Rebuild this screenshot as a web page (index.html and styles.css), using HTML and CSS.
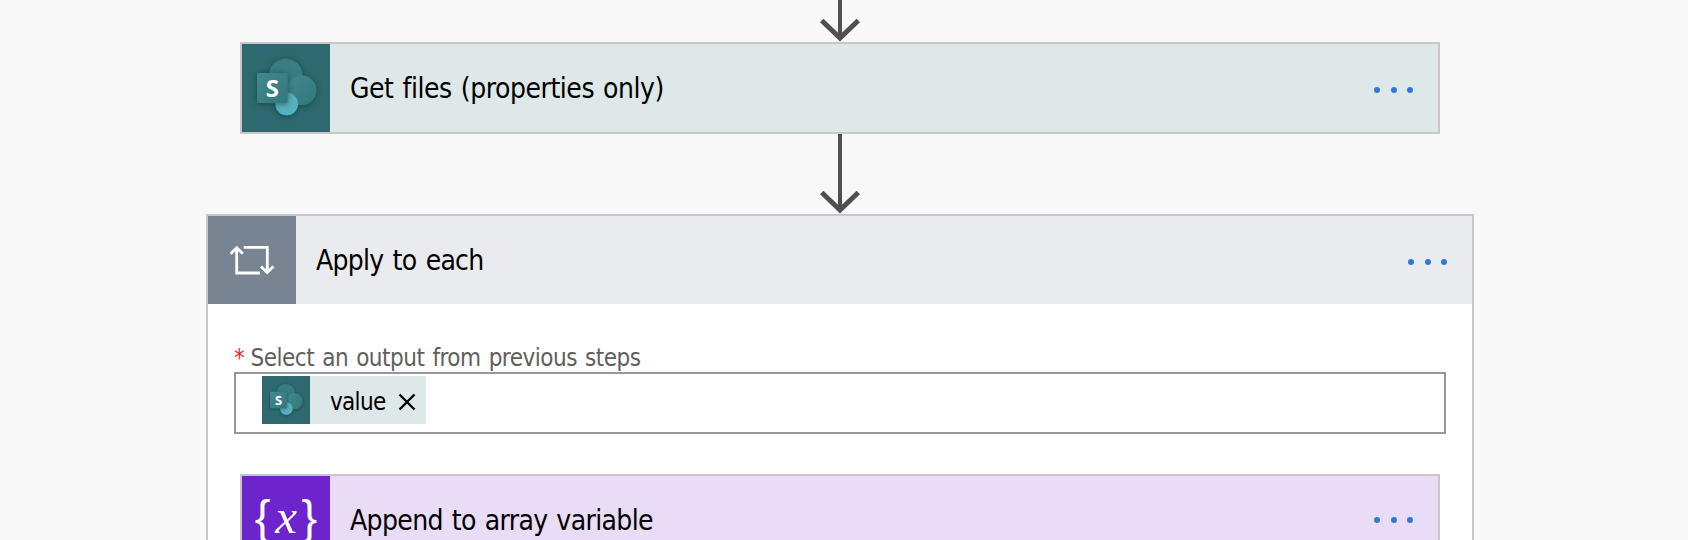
FILE: index.html
```
<!DOCTYPE html>
<html lang="en">
<head>
  <meta charset="UTF-8" />
  <meta name="viewport" content="width=device-width, initial-scale=1.0" />
  <title>Flow Designer</title>
  <link rel="stylesheet" href="styles.css">
</head>
<body>
  <!-- shared SharePoint logo -->
  <svg class="defs" width="0" height="0">
    <defs>
      <linearGradient id="tealFill" x1="0" y1="0" x2="1" y2="1">
        <stop offset="0" stop-color="#43898e" />
        <stop offset="1" stop-color="#32777c" />
      </linearGradient>
      <filter id="logoShadow" x="-30%" y="-30%" width="160%" height="160%">
        <feDropShadow dx="0" dy="1" stdDeviation="3" flood-color="#0f3336" flood-opacity="0.6" />
      </filter>
      <symbol id="sharepoint" viewBox="0 0 88 88">
        <g filter="url(#logoShadow)">
          <circle cx="43.7" cy="31.5" r="16.8" fill="#397d82" />
          <circle cx="59.7" cy="46.3" r="14.7" fill="url(#tealFill)" />
          <circle cx="44.7" cy="60" r="11.3" fill="#58b1c2" />
        </g>
        <rect x="15" y="29" width="30.7" height="30" rx="1.5" fill="url(#tealFill)" filter="url(#logoShadow)" />
        <text class="logo-letter" x="30.3" y="52.6" text-anchor="middle">S</text>
      </symbol>
    </defs>
  </svg>

  <main class="flow">
    <svg class="arrow arrow-top" viewBox="0 38 40 42">
      <path d="M20 0V75" />
      <path class="arrow-head" d="M1.7 58.5L20 76L38.3 58.5" />
    </svg>

    <section class="card card-files">
      <div class="card-icon">
        <svg width="88" height="88"><use href="#sharepoint" /></svg>
      </div>
      <h2 class="card-title title-files">Get files (properties only)</h2>
      <div class="menu"><span></span><span></span><span></span></div>
    </section>

    <svg class="arrow" viewBox="0 0 40 80">
      <path d="M20 0V75" />
      <path class="arrow-head" d="M1.7 58.5L20 76L38.3 58.5" />
    </svg>

    <section class="loop">
      <div class="loop-header">
        <div class="card-icon">
          <svg class="loop-icon" width="88" height="88" viewBox="0 0 88 88">
            <path d="M28.7 31.5V57H52M22.7 37.8L28.7 31.8L34.9 37.8" />
            <path d="M35.7 31.3H59.3V56M53 50.5L59.2 56.5L65.4 50.5" />
          </svg>
        </div>
        <h2 class="card-title title-loop">Apply to each</h2>
        <div class="menu"><span></span><span></span><span></span></div>
      </div>

      <div class="loop-body">
        <div class="field-label"><span class="required">*</span><span class="label-text">Select an output from previous steps</span></div>
        <div class="field">
          <div class="token">
            <svg class="token-icon" width="48" height="48"><use href="#sharepoint" /></svg>
            <span class="token-text">value</span>
            <svg class="token-close" width="18" height="18" viewBox="0 0 18 18">
              <path d="M1.5 1.5L16.5 16.5M16.5 1.5L1.5 16.5" />
            </svg>
          </div>
        </div>

        <section class="card card-append">
          <div class="card-icon">
            <span class="brace">{</span><span class="var">x</span><span class="brace">}</span>
          </div>
          <h2 class="card-title title-append">Append to array variable</h2>
          <div class="menu"><span></span><span></span><span></span></div>
        </section>
      </div>
    </section>
  </main>
</body>
</html>
```
FILE: styles.css
```
* {
  margin: 0;
  padding: 0;
  box-sizing: border-box;
}

body {
  height: 540px;
  overflow: hidden;
  background-color: #f8f8f8;
  color: #000;
  font-family: "DejaVu Sans Condensed", "DejaVu Sans", sans-serif;
  font-stretch: condensed;
}

svg {
  display: block;
  flex-shrink: 0;
}

.defs {
  position: absolute;
}

.flow {
  display: flex;
  flex-direction: column;
  align-items: center;
  width: 1680px;
  height: 540px;
  overflow: hidden;
}

.arrow {
  width: 40px;
  height: 80px;
  fill: none;
  stroke: #505050;
  stroke-width: 4;
}

.arrow-head {
  stroke-width: 5;
}

.arrow-top {
  height: 42px;
}

.card {
  display: flex;
  align-items: center;
  width: 1200px;
  height: 92px;
  flex-shrink: 0;
  border: 2px solid #c8c6c6;
}

.card-files {
  background-color: #dfe8e9;
}

.card-files .card-icon,
.token-icon {
  background-color: #2d696e;
}

.card-icon {
  display: flex;
  align-items: center;
  justify-content: center;
  width: 88px;
  height: 88px;
  flex-shrink: 0;
}

.logo-letter {
  fill: #fff;
  font-family: "Noto Sans", sans-serif;
  font-size: 24px;
  font-weight: 700;
}

.card-title {
  flex: 1;
  margin: 2px 0 0 20px;
  font-size: 28px;
  font-weight: 400;
  line-height: 40px;
  white-space: nowrap;
}

.title-files {
  letter-spacing: -0.46px;
  word-spacing: 1.5px;
}

.title-loop {
  letter-spacing: -0.75px;
  word-spacing: 2px;
}

.title-append {
  letter-spacing: -0.63px;
  word-spacing: 1.5px;
}

.menu {
  display: flex;
  gap: 10.5px;
  margin: 4px 25px 0 0;
}

.menu span {
  width: 6px;
  height: 6px;
  border-radius: 50%;
  background-color: #2f7ad6;
}

.loop {
  width: 1268px;
  flex-shrink: 0;
  border: 2px solid #c8c8c8;
  background-color: #fff;
}

.loop-header {
  display: flex;
  align-items: center;
  height: 88px;
  background-color: #eaebef;
}

.loop-header .card-icon {
  background-color: #788491;
}

.loop-icon {
  fill: none;
  stroke: #fff;
  stroke-width: 2.8;
}

.loop-body {
  padding: 36px 26px 0;
}

.field-label {
  display: flex;
  height: 32px;
  font-size: 24px;
  line-height: 36px;
  color: #605e5c;
  white-space: nowrap;
}

.required {
  width: 16.5px;
  color: #e03030;
}

.label-text {
  letter-spacing: -0.5px;
  word-spacing: 1.7px;
}

.field {
  height: 62px;
  padding: 2px 26px;
  border: 2px solid #989898;
}

.token {
  display: flex;
  align-items: center;
  width: 164px;
  height: 48px;
  background-color: #dfe8e9;
}

.token-text {
  width: 68px;
  margin: 4px 0 0 20px;
  font-size: 24px;
  line-height: 34px;
  letter-spacing: -0.7px;
}

.token-close {
  margin-top: 3px;
  fill: none;
  stroke: #000;
  stroke-width: 2.4;
}

.card-append {
  margin: 40px 0 0 6px;
  background-color: #e9dcf6;
}

.card-append .menu {
  margin-top: 0;
}

.card-append .card-icon {
  padding-bottom: 6px;
  background-color: #6d24cd;
  color: #fff;
}

.brace {
  font-family: "Liberation Sans", sans-serif;
  font-size: 47px;
  line-height: 50px;
}

.var {
  width: 31px;
  font-family: "Liberation Serif", serif;
  font-size: 49px;
  font-style: italic;
  line-height: 42px;
  text-align: center;
}
```
